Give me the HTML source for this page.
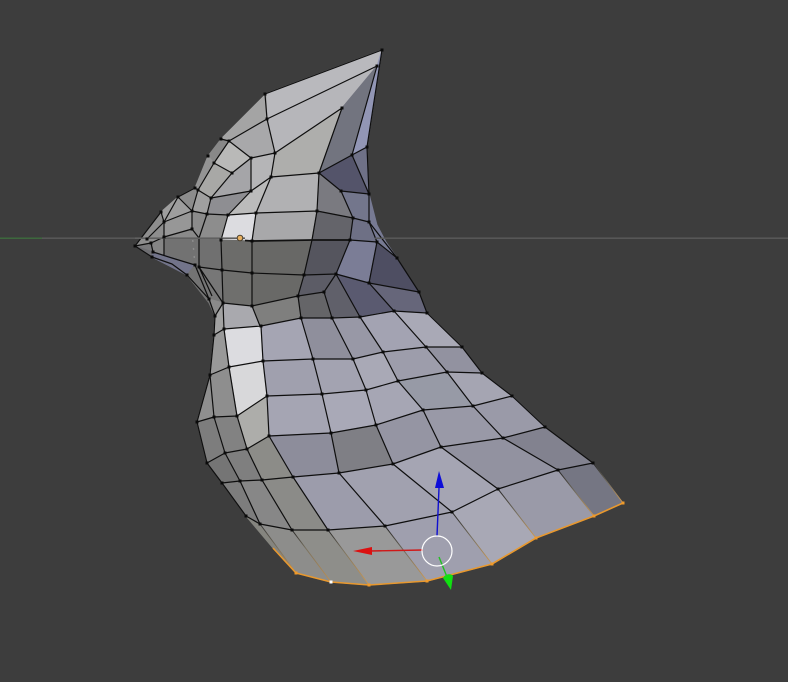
<!DOCTYPE html>
<html>
<head>
<meta charset="utf-8">
<title>Mesh viewport</title>
<style>
html,body{margin:0;padding:0;background:#3d3d3d;}
svg{display:block;filter:blur(.3px);}
</style>
</head>
<body>
<svg width="788" height="682" viewBox="0 0 788 682" xmlns="http://www.w3.org/2000/svg">
<defs>
<linearGradient id="g1" gradientUnits="userSpaceOnUse" x1="260" y1="524" x2="296" y2="573"><stop offset="0" stop-color="#333"/><stop offset=".5" stop-color="#77705f"/><stop offset="1" stop-color="#c09050"/></linearGradient>
<linearGradient id="g2" gradientUnits="userSpaceOnUse" x1="292" y1="530" x2="331" y2="582"><stop offset="0" stop-color="#222"/><stop offset=".35" stop-color="#77705f"/><stop offset="1" stop-color="#c09050"/></linearGradient>
<linearGradient id="g3" gradientUnits="userSpaceOnUse" x1="328" y1="530" x2="369" y2="585"><stop offset="0" stop-color="#222"/><stop offset=".35" stop-color="#77705f"/><stop offset="1" stop-color="#d09a50"/></linearGradient>
<linearGradient id="g4" gradientUnits="userSpaceOnUse" x1="385" y1="526" x2="427" y2="581"><stop offset="0" stop-color="#222"/><stop offset=".5" stop-color="#77705f"/><stop offset="1" stop-color="#d09a50"/></linearGradient>
<linearGradient id="g5" gradientUnits="userSpaceOnUse" x1="452" y1="512" x2="492" y2="564"><stop offset="0" stop-color="#222"/><stop offset=".5" stop-color="#77705f"/><stop offset="1" stop-color="#d09a50"/></linearGradient>
<linearGradient id="g6" gradientUnits="userSpaceOnUse" x1="498" y1="489" x2="536" y2="538"><stop offset="0" stop-color="#222"/><stop offset=".5" stop-color="#77705f"/><stop offset="1" stop-color="#d09a50"/></linearGradient>
<linearGradient id="g7" gradientUnits="userSpaceOnUse" x1="558" y1="470" x2="594" y2="516"><stop offset="0" stop-color="#222"/><stop offset=".5" stop-color="#77705f"/><stop offset="1" stop-color="#d09a50"/></linearGradient>
<linearGradient id="g8" gradientUnits="userSpaceOnUse" x1="593" y1="463" x2="623" y2="503"><stop offset="0" stop-color="#222"/><stop offset=".5" stop-color="#77705f"/><stop offset="1" stop-color="#d09a50"/></linearGradient>
</defs>
<rect width="788" height="682" fill="#3d3d3d"/>

<!-- faces -->
<g stroke-width="1" stroke-linejoin="round">
<polygon points="265,94 382,50 377,66 267,119" fill="#b9b9bd" stroke="#b9b9bd"/>
<polygon points="267,119 377,66 342,108 275,153" fill="#b6b6ba" stroke="#b6b6ba"/>
<polygon points="275,153 342,108 319,173 271,177" fill="#aeaeac" stroke="#aeaeac"/>
<polygon points="342,108 377,66 352,155 319,173" fill="#72747f" stroke="#72747f"/>
<polygon points="377,66 382,50 367,147 352,155" fill="#9296b5" stroke="#9296b5"/>
<polygon points="352,155 367,147 369,194" fill="#6f7187" stroke="#6f7187"/>
<polygon points="319,173 352,155 369,194 341,191" fill="#54546a" stroke="#54546a"/>
<polygon points="319,173 341,191 353,218 317,211" fill="#7a7a80" stroke="#7a7a80"/>
<polygon points="341,191 369,194 369,222 353,218" fill="#73768c" stroke="#73768c"/>
<polygon points="271,177 319,173 317,211 256,213" fill="#b1b1b3" stroke="#b1b1b3"/>
<polygon points="251,158 275,153 271,177 251,191" fill="#b5b5b7" stroke="#b5b5b7"/>
<polygon points="229,141 267,119 275,153 251,158" fill="#a8a8aa" stroke="#a8a8aa"/>
<polygon points="266,94 267,119 229,141 221,139" fill="#a4a4a4" stroke="#a4a4a4"/>
<polygon points="229,141 251,158 232,173 214,163" fill="#b9b9b8" stroke="#b9b9b8"/>
<polygon points="221,139 229,141 214,163 208,156" fill="#888888" stroke="#888888"/>
<polygon points="214,163 232,173 211,198 198,190" fill="#a8a8a6" stroke="#a8a8a6"/>
<polygon points="232,173 251,158 251,191 211,198" fill="#a5a5a8" stroke="#a5a5a8"/>
<polygon points="208,156 214,163 198,190 195,188" fill="#949494" stroke="#949494"/>
<polygon points="195,188 198,190 192,211 178,197" fill="#8c8c8c" stroke="#8c8c8c"/>
<polygon points="211,198 251,191 228,215 207,214" fill="#8e8e92" stroke="#8e8e92"/>
<polygon points="251,191 271,177 256,213 228,215" fill="#bbbbbb" stroke="#bbbbbb"/>
<polygon points="198,190 211,198 207,214 192,211" fill="#a0a0a0" stroke="#a0a0a0"/>
<polygon points="207,214 228,215 221,240 199,238" fill="#8d8d8d" stroke="#8d8d8d"/>
<polygon points="228,215 256,213 252,241 221,240" fill="#dcdce0" stroke="#dcdce0"/>
<polygon points="192,211 207,214 199,238 192,229" fill="#8b8b8b" stroke="#8b8b8b"/>
<polygon points="178,197 192,211 164,222 161,212" fill="#9e9e9e" stroke="#9e9e9e"/>
<polygon points="164,222 192,211 192,229 164,237" fill="#979797" stroke="#979797"/>
<polygon points="161,212 164,222 164,237 151,243 135,246" fill="#8e8e8e" stroke="#8e8e8e"/>
<!-- darker underside of beak -->
<polygon points="164,237 192,229 199,238" fill="#8a8a8a" stroke="#8a8a8a"/>
<polygon points="164,238 199,238 199,267 164,255" fill="#727272" stroke="#727272"/>
<polygon points="151,243 164,237 164,255 153,252" fill="#858585" stroke="#858585"/>
<polygon points="135,246 151,243 153,252" fill="#7a7a7c" stroke="#7a7a7c"/>
<polygon points="135,246 153,252 152,257" fill="#6e6e72" stroke="#6e6e72"/>
<polygon points="152,257 153,252 164,255 195,265 187,275" fill="#72748a" stroke="#72748a"/>
<polygon points="199,238 221,240 222,270 199,267" fill="#707070" stroke="#707070"/>
<polygon points="199,267 222,270 223,303 209,299" fill="#777777" stroke="#777777"/>
<polygon points="187,275 195,265 199,267 209,299 215,316 209,303" fill="#737373" stroke="#737373"/>
<polygon points="209,299 223,303 215,316" fill="#8a8a8a" stroke="#8a8a8a"/>
<polygon points="215,316 223,303 224,329 214,335" fill="#a2a2a2" stroke="#a2a2a2"/>
<polygon points="256,213 317,211 312,240 252,241" fill="#a8a8aa" stroke="#a8a8aa"/>
<polygon points="221,240 252,241 252,273 222,270" fill="#6c6c6a" stroke="#6c6c6a"/>
<polygon points="252,241 312,240 304,275 252,273" fill="#686866" stroke="#686866"/>
<polygon points="222,270 252,273 252,306 223,303" fill="#6f6f6d" stroke="#6f6f6d"/>
<polygon points="252,273 304,275 298,296 252,306" fill="#696967" stroke="#696967"/>
<polygon points="312,240 350,240 336,274 304,275" fill="#55555e" stroke="#55555e"/>
<polygon points="317,211 353,218 350,240 312,240" fill="#64646a" stroke="#64646a"/>
<polygon points="353,218 369,222 377,242 350,240" fill="#6e7085" stroke="#6e7085"/>
<polygon points="350,240 377,242 369,283 336,274" fill="#7b7d96" stroke="#7b7d96"/>
<polygon points="377,242 397,258 419,292 369,283" fill="#4e4e62" stroke="#4e4e62"/>
<polygon points="369,194 377,225 386,242 397,258 377,242 369,222" fill="#777a93" stroke="#777a93"/>
<polygon points="304,275 336,274 324,292 298,296" fill="#5c5c66" stroke="#5c5c66"/>
<polygon points="336,274 360,317 332,318 324,292" fill="#60606a" stroke="#60606a"/>
<polygon points="336,274 369,283 394,311 360,317" fill="#5a5a70" stroke="#5a5a70"/>
<polygon points="369,283 419,292 427,313 394,311" fill="#66667a" stroke="#66667a"/>
<polygon points="298,296 324,292 332,318 301,318" fill="#656568" stroke="#656568"/>
<polygon points="252,306 298,296 301,318 260,326" fill="#7f7f7e" stroke="#7f7f7e"/>
<polygon points="223,303 252,306 260,326 224,329" fill="#a9a9ae" stroke="#a9a9ae"/>

<polygon points="224,329 261,326 263,361 229,367" fill="#dcdce0" stroke="#dcdce0"/>
<polygon points="229,367 263,361 267,396 237,416" fill="#d8d8da" stroke="#d8d8da"/>
<polygon points="237,416 267,396 269,436 246,449" fill="#adadaa" stroke="#adadaa"/>
<polygon points="214,335 224,329 229,367 210,375" fill="#999999" stroke="#999999"/>
<polygon points="210,375 229,367 237,416 214,417" fill="#8e8e8e" stroke="#8e8e8e"/>
<polygon points="197,422 210,375 214,417" fill="#8f8f8f" stroke="#8f8f8f"/>
<polygon points="197,422 214,417 225,453 207,463" fill="#7d7d7d" stroke="#7d7d7d"/>
<polygon points="214,417 237,416 247,449 225,453" fill="#828282" stroke="#828282"/>
<polygon points="207,463 225,453 240,481 222,483" fill="#757575" stroke="#757575"/>
<polygon points="225,453 247,449 262,480 240,481" fill="#7f7f7f" stroke="#7f7f7f"/>
<polygon points="247,449 269,436 293,477 262,480" fill="#8c8c88" stroke="#8c8c88"/>
<polygon points="222,483 240,481 260,524 246,516" fill="#7d7d7d" stroke="#7d7d7d"/>
<polygon points="240,481 262,480 292,530 260,524" fill="#878787" stroke="#878787"/>
<polygon points="262,480 293,477 328,530 292,530" fill="#8b8b88" stroke="#8b8b88"/>
<polygon points="246,516 260,524 296,573 273,548" fill="#85857f" stroke="#85857f"/>
<polygon points="260,524 292,530 331,582 296,573" fill="#8d8d8b" stroke="#8d8d8b"/>
<polygon points="292,530 328,530 369,585 331,582" fill="#8e8e8a" stroke="#8e8e8a"/>
<polygon points="328,530 385,526 427,581 369,585" fill="#999999" stroke="#999999"/>
<polygon points="385,526 452,512 492,564 427,581" fill="#9f9fae" stroke="#9f9fae"/>
<polygon points="452,512 498,489 536,538 492,564" fill="#a8a8b5" stroke="#a8a8b5"/>
<polygon points="498,489 558,470 594,516 536,538" fill="#9a9aa8" stroke="#9a9aa8"/>
<polygon points="558,470 593,463 623,503 594,516" fill="#757683" stroke="#757683"/>

<polygon points="261,326 301,318 313,359 263,361" fill="#a5a5b3" stroke="#a5a5b3"/>
<polygon points="301,318 332,318 353,359 313,359" fill="#8f8f9c" stroke="#8f8f9c"/>
<polygon points="332,318 360,317 383,352 353,359" fill="#9898a6" stroke="#9898a6"/>
<polygon points="360,317 394,311 426,347 383,352" fill="#a3a3b2" stroke="#a3a3b2"/>
<polygon points="394,311 427,313 462,347 426,347" fill="#a9a9b6" stroke="#a9a9b6"/>

<polygon points="263,361 313,359 322,394 267,396" fill="#a0a0ae" stroke="#a0a0ae"/>
<polygon points="313,359 353,359 366,390 322,394" fill="#a3a3b1" stroke="#a3a3b1"/>
<polygon points="353,359 383,352 398,381 366,390" fill="#a9a9b6" stroke="#a9a9b6"/>
<polygon points="383,352 426,347 447,372 398,381" fill="#9d9dab" stroke="#9d9dab"/>
<polygon points="426,347 462,347 482,373 447,372" fill="#9292a0" stroke="#9292a0"/>

<polygon points="267,396 322,394 331,433 269,436" fill="#a5a5b3" stroke="#a5a5b3"/>
<polygon points="322,394 366,390 376,425 331,433" fill="#a9a9b7" stroke="#a9a9b7"/>
<polygon points="366,390 398,381 423,410 376,425" fill="#a6a6b4" stroke="#a6a6b4"/>
<polygon points="398,381 447,372 473,406 423,410" fill="#979aa6" stroke="#979aa6"/>
<polygon points="447,372 482,373 512,396 473,406" fill="#a5a5b2" stroke="#a5a5b2"/>

<polygon points="269,436 331,433 339,473 293,477" fill="#8d8d9b" stroke="#8d8d9b"/>
<polygon points="331,433 376,425 393,464 339,473" fill="#7f7f85" stroke="#7f7f85"/>
<polygon points="376,425 423,410 441,447 393,464" fill="#9595a3" stroke="#9595a3"/>
<polygon points="423,410 473,406 503,438 441,447" fill="#9999a7" stroke="#9999a7"/>
<polygon points="473,406 512,396 545,427 503,438" fill="#9a9aa8" stroke="#9a9aa8"/>

<polygon points="293,477 339,473 385,526 328,530" fill="#9c9cab" stroke="#9c9cab"/>
<polygon points="339,473 393,464 452,512 385,526" fill="#a1a1af" stroke="#a1a1af"/>
<polygon points="393,464 441,447 498,489 452,512" fill="#a5a5b3" stroke="#a5a5b3"/>
<polygon points="441,447 503,438 558,470 498,489" fill="#9292a0" stroke="#9292a0"/>
<polygon points="503,438 545,427 593,463 558,470" fill="#82828f" stroke="#82828f"/>
</g>

<!-- edges -->
<path fill="none" stroke="#0e0e0e" stroke-width="1.2" stroke-linejoin="round" d="
M382 50L265 94M377 66L267 119L229 141M342 108L275 153M342 108L319 173M377 66L352 155M382 50L367 147L369 194
M265 94L267 119L275 153L271 177L256 213L252 241L252 273L252 306L260 326
M229 141L251 158L275 153M251 158L251 191M251 158L232 173L211 198L198 190M229 141L214 163L232 173M214 163L198 190M221 139L229 141
M251 191L271 177L319 173L352 155L367 147M352 155L369 194L341 191L319 173L317 211L312 240L304 275L298 296L301 318
M211 198L251 191L228 215L221 240L222 270L223 303L224 329L229 367L237 416L247 449L262 480L292 530
M178 197L192 211L207 214L228 215L256 213L317 211L353 218L369 222M198 190L192 211L192 229M211 198L207 214L199 238L199 267
M178 197L195 188L198 190M178 197L164 222L164 237M161 212L164 222L192 211M164 237L192 229L199 238M147 239L164 222M151 243L164 237L164 255M135 246L161 212M135 246L151 243L153 252L172 258L195 265M135 246L152 257L172 264L187 275
M341 191L353 218L350 240L336 274L360 317M369 194L369 222L377 242L369 283L394 311M369 222L397 258L419 292L427 313M350 240L377 242L397 258
M336 274L369 283L419 292M304 275L336 274L324 292L298 296M324 292L332 318M252 273L304 275M199 267L222 270L252 273M252 306L298 296M223 303L252 306
M187 275L209 299L215 316M195 265L209 299M199 267L212 296M199 267L223 303M215 316L223 303M215 316L214 335L210 375L197 422L207 463L222 483L246 516
M214 335L224 329L261 326L301 318L332 318L360 317L394 311L427 313
M229 367L263 361L313 359L353 359L383 352L426 347L462 347
M210 375L229 367M237 416L267 396L322 394L366 390L398 381L447 372L482 373M197 422L214 417L237 416
M247 449L269 436L331 433L376 425L423 410L473 406L512 396M207 463L225 453L247 449
M222 483L240 481L262 480L293 477L339 473L393 464L441 447L503 438L545 427
M246 516L260 524L292 530L328 530L385 526L452 512L498 489L558 470L593 463
M210 375L214 417L225 453L240 481L260 524
M261 326L263 361L267 396L269 436L293 477L328 530
M301 318L313 359L322 394L331 433L339 473L385 526
M332 318L353 359L366 390L376 425L393 464L452 512
M360 317L383 352L398 381L423 410L441 447L498 489
M394 311L426 347L447 372L473 406L503 438L558 470
M427 313L462 347L482 373L512 396L545 427L593 463"/>
<path fill="none" stroke="#111" stroke-width="1.8" d="M245 240.5L252 241L312 240L350 240"/>
<!-- dashes on beak column -->
<path fill="none" stroke="#8e8e8e" stroke-width="1.4" stroke-dasharray="2 6" d="M192 232L195 265"/>

<!-- horizon -->
<rect x="0" y="237.5" width="135" height="1.4" fill="#5a5a5a"/>
<rect x="0" y="237.5" width="42" height="1.4" fill="#3c6a3c"/>
<rect x="135" y="237.4" width="110" height="1.6" fill="#606060"/>
<rect x="375" y="237.5" width="413" height="1.4" fill="#5a5a5a"/>

<!-- selected fading edges -->
<g fill="none" stroke-width="1">
<path d="M260 524.01L296 573" stroke="url(#g1)"/>
<path d="M292 530.01L331 582" stroke="url(#g2)"/>
<path d="M328 530.01L369 585" stroke="url(#g3)"/>
<path d="M385 526.01L427 581" stroke="url(#g4)"/>
<path d="M452 512.01L492 564" stroke="url(#g5)"/>
<path d="M498 489.01L536 538" stroke="url(#g6)"/>
<path d="M558 470.01L594 516" stroke="url(#g7)"/>
<path d="M593 463.01L623 503" stroke="url(#g8)"/>
</g>
<path fill="none" stroke="#e8982e" stroke-width="1.6" stroke-linejoin="round" d="M273 548L296 573L331 582L369 585L427 581L492 564L536 538L594 516L623 503"/>

<!-- vertices -->
<path fill="none" stroke="#0a0a0a" stroke-width="3" stroke-linecap="square" d="
M382 50h0M377 66h0M265 94h0M267 119h0M342 108h0M275 153h0M367 147h0M352 155h0M319 173h0M271 177h0M341 191h0M369 194h0
M221 139h0M229 141h0M208 156h0M214 163h0M251 158h0M232 173h0M251 191h0M195 188h0M198 190h0M178 197h0M211 198h0
M161 212h0M164 222h0M164 237h0M147 239h0M151 243h0M135 246h0M153 252h0M152 257h0M192 211h0M192 229h0M207 214h0M228 215h0M256 213h0
M221 240h0M252 241h0M199 267h0M195 265h0M187 275h0M222 270h0M252 273h0M209 299h0M223 303h0M252 306h0M215 316h0
M317 211h0M353 218h0M369 222h0M350 240h0M377 242h0M397 258h0M336 274h0M304 275h0M369 283h0M419 292h0M324 292h0M298 296h0
M427 313h0M394 311h0M360 317h0M332 318h0M301 318h0M224 329h0M261 326h0M214 335h0
M229 367h0M263 361h0M313 359h0M353 359h0M383 352h0M426 347h0M462 347h0M210 375h0
M267 396h0M322 394h0M366 390h0M398 381h0M447 372h0M482 373h0M197 422h0M214 417h0M237 416h0
M269 436h0M331 433h0M376 425h0M423 410h0M473 406h0M512 396h0M207 463h0M225 453h0M247 449h0
M222 483h0M240 481h0M262 480h0M293 477h0M339 473h0M393 464h0M441 447h0M503 438h0M545 427h0
M246 516h0M260 524h0M292 530h0M328 530h0M385 526h0M452 512h0M498 489h0M558 470h0M593 463h0"/>
<path fill="none" stroke="#f09a2a" stroke-width="3" stroke-linecap="square" d="M296 573h0M369 585h0M427 581h0M492 564h0M536 538h0M594 516h0M623 503h0"/>
<path fill="none" stroke="#ffffff" stroke-width="3" stroke-linecap="square" d="M331 582h0"/>

<!-- origin dot -->
<circle cx="240" cy="238" r="2.8" fill="#e8b060" stroke="#4a4030" stroke-width="1"/>

<!-- gizmo -->
<path fill="none" stroke="#d01818" stroke-width="1.4" d="M423 550L370 551"/>
<polygon points="353,551 372,547 372,555" fill="#dc1010"/>
<path fill="none" stroke="#1010d0" stroke-width="1.4" d="M437 536L439 488"/>
<polygon points="439,471 444,488 435,488" fill="#0c0cd8"/>
<path fill="none" stroke="#20c020" stroke-width="1.4" d="M439 557L447 577"/>
<path d="M443 578C445 574 451 573 453 576L451 590Z" fill="#10e010"/>
<circle cx="437" cy="551" r="15" fill="none" stroke="#ffffff" stroke-width="1.2"/>
</svg>
</body>
</html>
